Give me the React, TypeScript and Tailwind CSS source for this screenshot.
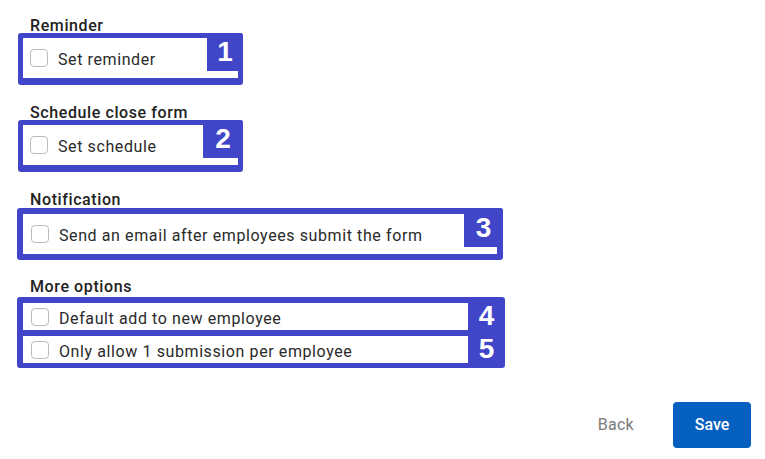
import React from "react";

const BLUE = "bg-[#4146c8]";

function Checkbox() {
  return <span className="inline-block w-[18px] h-[18px] rounded-[4px] border border-[#b8bcc2] bg-white shrink-0" />;
}

function Tab({ n, w, h }: { n: string; w: string; h: string }) {
  return (
    <div
      className={`absolute top-0 right-0 ${w} ${h} ${BLUE} rounded-tr-[3px] flex items-center justify-center text-white font-bold text-[28px] leading-none`}
      style={{ fontFamily: '"Liberation Sans", Arial, sans-serif' }}
    >
      {n}
    </div>
  );
}

function Heading({ children, mt }: { children: React.ReactNode; mt: string }) {
  return (
    <div className={`${mt} pl-[30px] text-[16px] font-medium text-[#222] leading-[15px] tracking-[0.6px]`}>
      {children}
    </div>
  );
}

function Option({ label }: { label: string }) {
  return (
    <div className="flex items-center gap-[10px]">
      <Checkbox />
      <span className="pt-[4px] text-[16px] text-[#2a2a2a] leading-none tracking-[0.6px]">{label}</span>
    </div>
  );
}

export default function App() {
  return (
    <div
      className="w-[765px] h-[459px] bg-white"
      style={{ fontFamily: 'Roboto, "Liberation Sans", Arial, sans-serif' }}
    >
      <div className="flex flex-col pt-[18px]">
        <Heading mt="mt-0">Reminder</Heading>
        <div className={`relative ml-[18px] mt-0 w-[225px] ${BLUE} rounded-[3px] pt-[5px] px-[5px] pb-[7px]`}>
          <div className="bg-white h-[40px] flex items-center pl-[7px]">
            <Option label="Set reminder" />
          </div>
          <Tab n="1" w="w-[36px]" h="h-[38px]" />
        </div>

        <Heading mt="mt-[20px]">Schedule close form</Heading>
        <div className={`relative ml-[18px] mt-0 w-[225px] ${BLUE} rounded-[3px] pt-[5px] px-[5px] pb-[7px]`}>
          <div className="bg-white h-[40px] flex items-center pl-[7px]">
            <Option label="Set schedule" />
          </div>
          <Tab n="2" w="w-[40px]" h="h-[38px]" />
        </div>

        <Heading mt="mt-[20px]">Notification</Heading>
        <div className={`relative ml-[17px] mt-[1px] w-[486px] ${BLUE} rounded-[3px] p-[6px]`}>
          <div className="bg-white h-[40px] flex items-center pl-[8px]">
            <Option label="Send an email after employees submit the form" />
          </div>
          <Tab n="3" w="w-[39px]" h="h-[39px]" />
        </div>

        <Heading mt="mt-[19px]">More options</Heading>
        <div className={`ml-[17px] mt-[3px] w-[488px] ${BLUE} rounded-[3px] flex`}>
          <div className="flex-1 flex flex-col gap-[6px] pt-[6px] pb-[5px] pl-[6px]">
            <div className="bg-white h-[27px] flex items-center pl-[8px]">
              <Option label="Default add to new employee" />
            </div>
            <div className="bg-white h-[27px] flex items-center pl-[8px]">
              <Option label="Only allow 1 submission per employee" />
            </div>
          </div>
          <div
            className="w-[37px] flex flex-col items-center justify-around text-white font-bold text-[28px] leading-none py-[2px]"
            style={{ fontFamily: '"Liberation Sans", Arial, sans-serif' }}
          >
            <span>4</span>
            <span>5</span>
          </div>
        </div>

        <div className="flex justify-end items-center mt-[34px] pr-[14px] gap-[39px]">
          <button className="text-[16px] text-[#7a7a7a] tracking-[0.3px]">Back</button>
          <button className="w-[78px] h-[46px] rounded-[4px] bg-[#0560bf] text-white text-[16px] font-medium">
            Save
          </button>
        </div>
      </div>
    </div>
  );
}
